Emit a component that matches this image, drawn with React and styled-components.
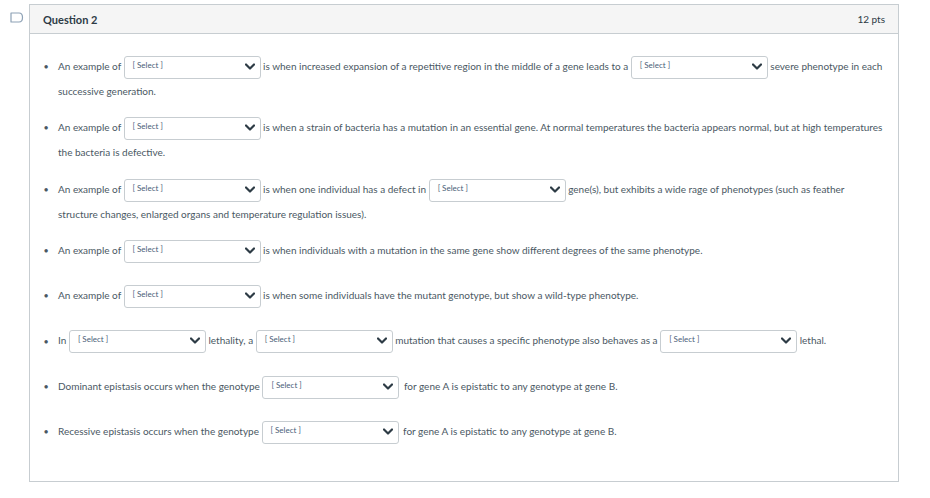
import React from 'react';
import styled, { createGlobalStyle } from 'styled-components';

const GlobalStyle = createGlobalStyle`
  body {
    margin: 0;
    background: #fff;
    font-family: Lato, 'Open Sans', sans-serif;
    color: #2d3b45;
  }
`;

const Page = styled.div`
  display: flex;
  align-items: flex-start;
  padding: 4px 0 0 10px;
  gap: 5px;
`;

const FlagButton = styled.div`
  width: 14px;
  padding-top: 8px;
  display: flex;
`;

const Card = styled.div`
  width: 868px;
  border: 1px solid #c7cdd1;
  background: #fff;
`;

const Header = styled.div`
  height: 28px;
  display: flex;
  align-items: center;
  justify-content: space-between;
  padding: 0 13px;
  background: #f5f5f5;
  border-bottom: 1px solid #c7cdd1;
`;

const Title = styled.h2`
  margin: 0;
  font-size: 11px;
  font-weight: 700;
  color: #2d3b45;
`;

const Points = styled.span`
  font-size: 10px;
`;

const List = styled.ul`
  margin: 0;
  padding: 18px 12px 33px 28px;
  list-style: disc outside;
`;

const Item = styled.li`
  font-size: 10px;
  line-height: 16px;
  margin-bottom: 14.3px;
  color: #4a5863;
  &:last-child {
    margin-bottom: 0;
  }
  &::marker {
    content: '•    ';
    font-size: 9px;
  }
`;

const SelectBox = styled.span`
  display: inline-flex;
  align-items: center;
  justify-content: space-between;
  box-sizing: border-box;
  width: 137px;
  height: 23px;
  margin: 4px ${(p) => (p.$wide ? '2px' : '0')} 4px 0;
  padding: 0 5px 2px 8px;
  border: 1px solid #c7cdd1;
  border-radius: 3px;
  background: #fff;
  vertical-align: middle;
  line-height: 1;
`;

const Placeholder = styled.span`
  font-size: 8px;
  color: #4a6078;
  margin-top: -3px;
`;

const Flag = () => (
  <svg width="14" height="11" viewBox="0 0 14 11">
    <path d="M1 1 H9 Q12.5 1 12.5 5.5 Q12.5 10 9 10 H1 Z" fill="none" stroke="#8ea2b6" strokeWidth="1.2" strokeLinejoin="round" />
  </svg>
);

const Chevron = () => (
  <svg width="10" height="7" viewBox="0 0 10 7">
    <polyline points="1,1.5 5,5.5 9,1.5" fill="none" stroke="#2d3b45" strokeWidth="2.2" strokeLinecap="round" strokeLinejoin="round" />
  </svg>
);

const Select = ({ wide }) => (
  <SelectBox $wide={wide}>
    <Placeholder>[ Select ]</Placeholder>
    <Chevron />
  </SelectBox>
);

export default function App() {
  return (
    <>
      <GlobalStyle />
      <Page>
        <FlagButton>
          <Flag />
        </FlagButton>
        <Card>
          <Header>
            <Title>Question 2</Title>
            <Points>12 pts</Points>
          </Header>
          <List>
            <Item>
              An example of <Select /> is when increased expansion of a repetitive region in the middle of a gene
              leads to a <Select /> severe phenotype in each successive generation.
            </Item>
            <Item>
              An example of <Select /> is when a strain of bacteria has a mutation in an essential gene. At normal
              temperatures the bacteria appears normal, but at high temperatures the bacteria is defective.
            </Item>
            <Item>
              An example of <Select /> is when one individual has a defect in <Select /> gene(s), but exhibits a wide
              rage of phenotypes (such as feather structure changes, enlarged organs and temperature regulation
              issues).
            </Item>
            <Item>
              An example of <Select /> is when individuals with a mutation in the same gene show different degrees of
              the same phenotype.
            </Item>
            <Item>
              An example of <Select /> is when some individuals have the mutant genotype, but show a wild-type
              phenotype.
            </Item>
            <Item>
              In <Select /> lethality, a <Select /> mutation that causes a specific phenotype also behaves as a{' '}
              <Select /> lethal.
            </Item>
            <Item>
              Dominant epistasis occurs when the genotype <Select wide /> for gene A is epistatic to any genotype at
              gene B.
            </Item>
            <Item>
              Recessive epistasis occurs when the genotype <Select wide /> for gene A is epistatic to any genotype at
              gene B.
            </Item>
          </List>
        </Card>
      </Page>
    </>
  );
}
